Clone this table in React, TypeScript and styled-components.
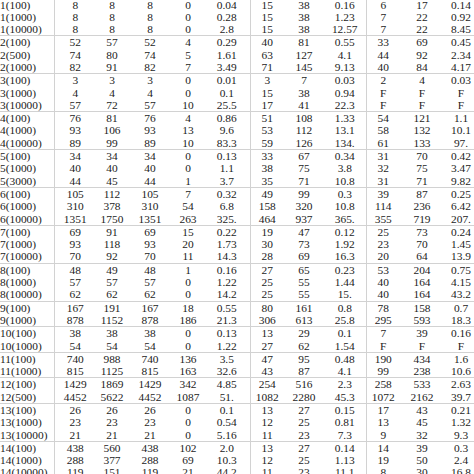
import * as React from "react";
import styled, { createGlobalStyle } from "styled-components";

const GlobalStyle = createGlobalStyle`
  html, body {
    margin: 0;
    padding: 0;
    background: #ffffff;
    overflow: hidden;
  }
`;

// column widths, chosen so that every centred column lands where the scan has it
const widths = [54, 42, 32, 44, 32, 46, 34, 40, 42, 34, 44, 34];
// columns followed by a vertical rule
const ruled = [0, 5, 8];

type Row = string[];

// each group is one instance family, split by a horizontal rule
const groups: Row[][] = [
  [
    ["1(100)", "8", "8", "8", "0", "0.04", "15", "38", "0.16", "6", "17", "0.14"],
    ["1(1000)", "8", "8", "8", "0", "0.28", "15", "38", "1.23", "7", "22", "0.92"],
    ["1(10000)", "8", "8", "8", "0", "2.8", "15", "38", "12.57", "7", "22", "8.45"],
  ],
  [
    ["2(100)", "52", "57", "52", "4", "0.29", "40", "81", "0.55", "33", "69", "0.45"],
    ["2(500)", "74", "80", "74", "5", "1.61", "63", "127", "4.1", "44", "92", "2.34"],
    ["2(1000)", "82", "91", "82", "7", "3.49", "71", "145", "9.13", "40", "84", "4.17"],
  ],
  [
    ["3(100)", "3", "3", "3", "0", "0.01", "3", "7", "0.03", "2", "4", "0.03"],
    ["3(1000)", "4", "4", "4", "0", "0.1", "15", "38", "0.94", "F", "F", "F"],
    ["3(10000)", "57", "72", "57", "10", "25.5", "17", "41", "22.3", "F", "F", "F"],
  ],
  [
    ["4(100)", "76", "81", "76", "4", "0.86", "51", "108", "1.33", "54", "121", "1.1"],
    ["4(1000)", "93", "106", "93", "13", "9.6", "53", "112", "13.1", "58", "132", "10.1"],
    ["4(10000)", "89", "99", "89", "10", "83.3", "59", "126", "134.", "61", "133", "97."],
  ],
  [
    ["5(100)", "34", "34", "34", "0", "0.13", "33", "67", "0.34", "31", "70", "0.42"],
    ["5(1000)", "40", "40", "40", "0", "1.1", "38", "75", "3.8", "32", "75", "3.47"],
    ["5(3000)", "44", "45", "44", "1", "3.7", "35", "71", "10.8", "31", "71", "9.82"],
  ],
  [
    ["6(100)", "105", "112", "105", "7", "0.32", "49", "99", "0.3", "39", "87", "0.25"],
    ["6(1000)", "310", "378", "310", "54", "6.8", "158", "320", "10.8", "114", "236", "6.42"],
    ["6(10000)", "1351", "1750", "1351", "263", "325.", "464", "937", "365.", "355", "719", "207."],
  ],
  [
    ["7(100)", "69", "91", "69", "15", "0.22", "19", "47", "0.12", "25", "73", "0.24"],
    ["7(1000)", "93", "118", "93", "20", "1.73", "30", "73", "1.92", "23", "70", "1.45"],
    ["7(10000)", "70", "92", "70", "11", "14.3", "28", "69", "16.3", "20", "64", "13.9"],
  ],
  [
    ["8(100)", "48", "49", "48", "1", "0.16", "27", "65", "0.23", "53", "204", "0.75"],
    ["8(1000)", "57", "57", "57", "0", "1.22", "25", "55", "1.44", "40", "164", "4.15"],
    ["8(10000)", "62", "62", "62", "0", "14.2", "25", "55", "15.", "40", "164", "43.2"],
  ],
  [
    ["9(100)", "167", "191", "167", "18", "0.55", "80", "161", "0.8", "78", "158", "0.7"],
    ["9(1000)", "878", "1152", "878", "186", "21.3", "306", "613", "25.8", "295", "593", "18.3"],
  ],
  [
    ["10(100)", "38", "38", "38", "0", "0.13", "13", "29", "0.1", "7", "39", "0.16"],
    ["10(1000)", "54", "54", "54", "0", "1.22", "27", "62", "1.54", "F", "F", "F"],
  ],
  [
    ["11(100)", "740", "988", "740", "136", "3.5", "47", "95", "0.48", "190", "434", "1.6"],
    ["11(1000)", "815", "1125", "815", "163", "32.6", "43", "87", "4.1", "99", "238", "10.6"],
  ],
  [
    ["12(100)", "1429", "1869", "1429", "342", "4.85", "254", "516", "2.3", "258", "533", "2.63"],
    ["12(500)", "4452", "5622", "4452", "1087", "51.", "1082", "2280", "45.3", "1072", "2162", "39.7"],
  ],
  [
    ["13(100)", "26", "26", "26", "0", "0.1", "13", "27", "0.15", "17", "43", "0.21"],
    ["13(1000)", "23", "23", "23", "0", "0.54", "12", "25", "0.81", "13", "45", "1.32"],
    ["13(10000)", "21", "21", "21", "0", "5.16", "11", "23", "7.3", "9", "32", "9.3"],
  ],
  [
    ["14(100)", "438", "560", "438", "102", "2.0", "13", "27", "0.14", "14", "39", "0.3"],
    ["14(1000)", "288", "377", "288", "69", "10.3", "12", "25", "1.13", "19", "50", "2.4"],
    ["14(10000)", "119", "151", "119", "21", "44.2", "11", "23", "11.1", "8", "30", "16.8"],
  ],
];

const Page = styled.div`
  width: 474px;
  height: 474px;
  overflow: hidden;
`;

const Table = styled.table`
  margin-top: -1.5px;
  width: ${widths.reduce((a, b) => a + b, 0)}px;
  table-layout: fixed;
  border-collapse: collapse;
  border-spacing: 0;
  font-family: "Liberation Serif", "Times New Roman", serif;
  font-size: 11.4px;
  color: #1c1c1c;
`;

const Cell = styled.td<{ $first?: boolean; $rule?: boolean; $groupEnd?: boolean }>`
  height: 12.3px;
  line-height: 12.3px;
  padding: 0;
  white-space: nowrap;
  text-align: ${(p) => (p.$first ? "left" : "center")};
  border-right: ${(p) => (p.$rule ? "1px solid #d2d2d2" : "none")};
  border-bottom: ${(p) => (p.$groupEnd ? "1px solid #d2d2d2" : "none")};
`;

export default function App() {
  return (
    <Page>
      <GlobalStyle />
      <Table>
        <colgroup>
          {widths.map((w, i) => (
            <col key={i} style={{ width: w }} />
          ))}
        </colgroup>
        <tbody>
          {groups.map((group, gi) =>
            group.map((row, ri) => (
              <tr key={`${gi}-${ri}`}>
                {row.map((value, ci) => (
                  <Cell
                    key={ci}
                    $first={ci === 0}
                    $rule={ruled.includes(ci)}
                    $groupEnd={ri === group.length - 1 && gi < groups.length - 1}
                  >
                    {value}
                  </Cell>
                ))}
              </tr>
            ))
          )}
        </tbody>
      </Table>
    </Page>
  );
}
